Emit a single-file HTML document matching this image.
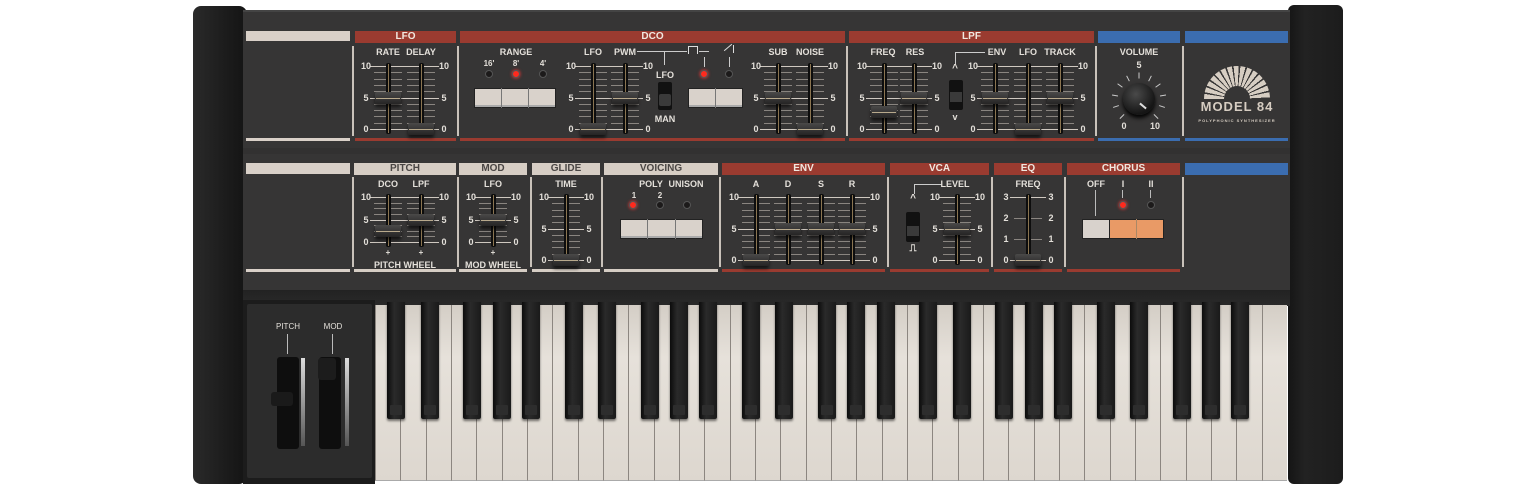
<!DOCTYPE html>
<html><head><meta charset="utf-8">
<style>
*{margin:0;padding:0;box-sizing:border-box}
body{width:1536px;height:488px;background:#fff;position:relative;overflow:hidden;font-family:"Liberation Sans",sans-serif}
div{position:absolute}
.t{color:#e4e0da;font-size:9px;font-weight:bold;white-space:nowrap;transform:translateX(-50%);line-height:10px}
.h{height:12px;font-size:10px;font-weight:bold;text-align:center;line-height:12px;color:#f0e8e0}
.r{background:#9a3b30}.c{background:#d6cdc4;color:#4a4644}.b{background:#3b6db0}
.led{width:8px;height:8px;border-radius:50%;background:#1c1a1a;border:1px solid #555}
.on{background:#ff2a1e;box-shadow:0 0 3px #f33}
</style></head><body>
<div style="left:193px;top:6px;width:54px;height:478px;background:linear-gradient(90deg,#2a2a2a,#1c1c1c 60%,#141414);border-radius:8px"></div>
<div style="left:1288px;top:5px;width:55px;height:479px;background:linear-gradient(90deg,#151515,#222 30%,#1c1c1c);border-radius:6px"></div>
<div style="left:243px;top:10px;width:1047px;height:282px;background:#363535;border-top:2px solid #444"></div>
<div style="left:243px;top:148px;width:1047px;height:6px;background:#323131"></div>
<div style="left:243px;top:290px;width:1047px;height:16px;background:linear-gradient(#222,#2a2a2a)"></div>
<div style="left:243px;top:300px;width:132px;height:184px;background:#1c1c1c"></div>
<div style="left:247px;top:304px;width:125px;height:174px;background:#2c2c2c;border-radius:2px"></div>
<div class="t" style="left:288px;top:322px;font-weight:normal;font-size:8px">PITCH</div>
<div class="t" style="left:333px;top:322px;font-weight:normal;font-size:8px">MOD</div>
<div style="left:287px;top:334px;width:1px;height:20px;background:#bbb"></div>
<div style="left:332px;top:334px;width:1px;height:20px;background:#bbb"></div>
<div style="left:277px;top:357px;width:22px;height:92px;background:#0e0e0e;border-radius:3px"></div>
<div style="left:271px;top:392px;width:22px;height:14px;background:#1a1a1a;border-radius:3px"></div>
<div style="left:319px;top:357px;width:22px;height:92px;background:#0e0e0e;border-radius:3px"></div>
<div style="left:318px;top:358px;width:18px;height:22px;background:#1c1c1c;border-radius:3px"></div>
<div style="left:301px;top:358px;width:4px;height:88px;background:linear-gradient(#ddd,#555)"></div>
<div style="left:345px;top:358px;width:4px;height:88px;background:linear-gradient(#ddd,#555)"></div>
<script>
var R=document.body;
function el(s,c,t){var d=document.createElement('div');d.style.cssText=s;if(c)d.className=c;if(t)d.textContent=t;R.appendChild(d);return d}
function hdr(x,w,y,cls,t){el('left:'+x+'px;top:'+y+'px;width:'+w+'px','h '+cls,t)}
function line(x,w,y,cls){el('left:'+x+'px;top:'+y+'px;width:'+w+'px;height:3px','h '+cls)}
function vl(x,y,h){el('left:'+x+'px;top:'+y+'px;width:2px;height:'+h+'px;background:#c9c2ba')}
function txt(x,y,t,fs){el('left:'+x+'px;top:'+y+'px'+(fs?';font-size:'+fs+'px':''),'t',t)}
function slider(x,y0,y1,k,L,Rt,n){
 n=n||10;
 for(var i=0;i<=n;i++){var y=y0+(y1-y0)*i/n;var maj=(i==0||i==n||i*2==n);
  el('left:'+(x-(maj?18:14))+'px;top:'+y+'px;width:'+(maj?36:28)+'px;height:1px;background:'+(maj?'#cfc8c0':'#8a8580'))}
 el('left:'+(x-2)+'px;top:'+(y0-3)+'px;width:5px;height:'+(y1-y0+8)+'px;background:#0d0d0d;border-radius:2px');
 el('left:'+(x)+'px;top:'+(y0-2)+'px;width:1px;height:'+(y1-y0+6)+'px;background:#8a7450');
 var ky=y1-(y1-y0)*k;
 el('left:'+(x-13)+'px;top:'+(ky-6)+'px;width:26px;height:12px;background:linear-gradient(#4a4948,#252424);border-radius:2px;box-shadow:0 3px 3px rgba(0,0,0,.6)');
 el('left:'+(x-12)+'px;top:'+(ky)+'px;width:24px;height:1px;background:#b8a98c');
 if(L){for(var j=0;j<L.length;j++){var yy=y0+(y1-y0)*j/(L.length-1);txt(x-22,yy-5,L[j]);}}
 if(Rt){for(var j=0;j<Rt.length;j++){var yy=y0+(y1-y0)*j/(Rt.length-1);txt(x+23,yy-5,Rt[j]);}}
}
var S=['10','5','0'];
el('left:246px;top:31px;width:104px;height:10px;background:#d9d0c8');
el('left:246px;top:138px;width:104px;height:3px;background:#d9d0c8');
hdr(355,101,31,'r','LFO');hdr(460,385,31,'r','DCO');hdr(849,245,31,'r','LPF');hdr(1098,82,31,'b','');hdr(1185,103,31,'b','');
line(355,101,138,'r');line(460,385,138,'r');line(849,245,138,'r');line(1098,82,138,'b');line(1185,103,138,'b');
vl(352,46,90);vl(457,46,90);vl(846,46,90);vl(1095,46,90);vl(1182,46,90);
txt(388,47,'RATE');txt(421,47,'DELAY');
slider(388,66,129,0.5,S,null);slider(421,66,129,0,null,S);
txt(516,47,'RANGE');txt(489,59,"16'",8);txt(516,59,"8'",8);txt(543,59,"4'",8);
el('left:485px;top:70px','led');el('left:512px;top:70px','led on');el('left:539px;top:70px','led');
el('left:474px;top:88px;width:82px;height:20px;background:#d9d2cb;border:1px solid #222;box-shadow:inset 0 -2px 0 #aaa');
el('left:501px;top:88px;width:1px;height:20px;background:#777');el('left:528px;top:88px;width:1px;height:20px;background:#777');
txt(593,47,'LFO');txt(625,47,'PWM');
slider(593,66,129,0,S,null);slider(625,66,129,0.5,null,S);
el('left:637px;top:51px;width:50px;height:1px;background:#ccc');el('left:699px;top:51px;width:10px;height:1px;background:#ccc');
el('left:664px;top:51px;width:1px;height:14px;background:#ccc');
el('left:688px;top:46px;width:10px;height:8px;border:1px solid #ddd;border-bottom:none');
el('left:723px;top:47px;width:10px;height:1px;background:#ddd;transform:rotate(-40deg)');
el('left:733px;top:45px;width:1px;height:8px;background:#ddd');
el('left:704px;top:57px;width:1px;height:10px;background:#ccc');el('left:729px;top:57px;width:1px;height:10px;background:#ccc');
txt(665,70,'LFO');txt(665,114,'MAN');
el('left:658px;top:82px;width:14px;height:28px;background:#111;border-radius:2px');
el('left:659px;top:94px;width:12px;height:12px;background:#3a3a3a;border-radius:2px');
el('left:700px;top:70px','led on');el('left:725px;top:70px','led');
el('left:688px;top:88px;width:55px;height:20px;background:#d9d2cb;border:1px solid #222;box-shadow:inset 0 -2px 0 #aaa');
el('left:715px;top:88px;width:1px;height:20px;background:#777');
txt(778,47,'SUB');txt(810,47,'NOISE');
slider(778,66,129,0.5,S,null);slider(810,66,129,0,null,S);
txt(883,47,'FREQ');txt(915,47,'RES');
slider(884,66,129,0.27,S,null);slider(914,66,129,0.5,null,S);
el('left:955px;top:52px;width:30px;height:1px;background:#ccc');el('left:955px;top:52px;width:1px;height:12px;background:#ccc');
txt(955,64,'^',10);txt(955,112,'v',9);
el('left:949px;top:80px;width:14px;height:30px;background:#111;border-radius:2px');
el('left:950px;top:92px;width:12px;height:10px;background:#3a3a3a');
txt(997,47,'ENV');txt(1028,47,'LFO');txt(1060,47,'TRACK');
slider(995,66,129,0.5,S,null);slider(1028,66,129,0,null,null);slider(1060,66,129,0.5,null,S);
txt(1139,47,'VOLUME');txt(1139,60,'5');txt(1124,121,'0');txt(1155,121,'10');
for(var a=0;a<11;a++){var ang=(-135+27*a)*Math.PI/180;var cx=1139+Math.sin(ang)*24,cy=99-Math.cos(ang)*24;
 el('left:'+(cx-3)+'px;top:'+cy+'px;width:6px;height:1px;background:#ccc;transform:rotate('+(-135+27*a+90)+'deg)');}
el('left:1123px;top:83px;width:32px;height:32px;border-radius:50%;background:radial-gradient(circle at 40% 35%,#4a4a4a,#151515 70%);box-shadow:0 3px 4px #000');
el('left:1142px;top:102px;width:2px;height:8px;background:#ddd;transform:rotate(-50deg)');
el('left:1204px;top:66px;width:66px;height:33px;border-radius:33px 33px 0 0;background:repeating-conic-gradient(from -90deg at 50% 100%,#d6cdc2 0 9deg,#363535 9deg 12deg);');
el('left:1224px;top:86px;width:26px;height:13px;border-radius:13px 13px 0 0;background:#363535');
el('left:1237px;top:102px;font-size:13px;letter-spacing:1px;color:#d6cdc2','t','MODEL 84');
el('left:1237px;top:116px;font-size:4px;letter-spacing:1px;color:#d6cdc2','t','POLYPHONIC SYNTHESIZER');
el('left:246px;top:163px;width:104px;height:11px;background:#d9d0c8');
el('left:246px;top:269px;width:104px;height:3px;background:#d9d0c8');
hdr(354,102,163,'c','PITCH');hdr(459,68,163,'c','MOD');hdr(532,68,163,'c','GLIDE');hdr(604,114,163,'c','VOICING');
hdr(722,163,163,'r','ENV');hdr(890,99,163,'r','VCA');hdr(994,68,163,'r','EQ');hdr(1067,113,163,'r','CHORUS');hdr(1185,103,163,'b','');
line(354,102,269,'c');line(459,68,269,'c');line(532,68,269,'c');line(604,114,269,'c');
line(722,163,269,'r');line(890,99,269,'r');line(994,68,269,'r');line(1067,113,269,'r');
vl(352,177,90);vl(457,177,90);vl(530,177,90);vl(601,177,90);vl(719,177,90);vl(887,177,90);vl(991,177,90);vl(1064,177,90);vl(1182,177,90);
txt(388,179,'DCO');txt(421,179,'LPF');
slider(388,197,242,0.25,S,null,8);slider(421,197,242,0.5,null,S,8);
txt(388,248,'+',8);txt(421,248,'+',8);txt(405,260,'PITCH WHEEL');
txt(493,179,'LFO');slider(493,197,242,0.5,S,S,8);txt(493,248,'+',8);txt(493,260,'MOD WHEEL');
txt(566,179,'TIME');slider(566,197,260,0,['10','5','0'],['10','5','0']);
txt(651,179,'POLY');txt(686,179,'UNISON');txt(634,191,'1',8);txt(660,191,'2',8);
el('left:629px;top:201px','led on');el('left:656px;top:201px','led');el('left:683px;top:201px','led');
el('left:620px;top:219px;width:83px;height:20px;background:#d9d2cb;border:1px solid #222;box-shadow:inset 0 -2px 0 #aaa');
el('left:647px;top:219px;width:1px;height:20px;background:#777');el('left:675px;top:219px;width:1px;height:20px;background:#777');
txt(756,179,'A');txt(788,179,'D');txt(821,179,'S');txt(852,179,'R');
slider(756,197,260,0,S,null);slider(788,197,260,0.5,null,null);slider(821,197,260,0.5,null,null);slider(852,197,260,0.5,null,S);
el('left:914px;top:184px;width:28px;height:1px;background:#ccc');el('left:914px;top:184px;width:1px;height:10px;background:#ccc');
txt(955,179,'LEVEL');txt(913,194,'^',10);txt(913,244,'⎍',10);
el('left:906px;top:212px;width:14px;height:30px;background:#111;border-radius:2px');
el('left:907px;top:226px;width:12px;height:10px;background:#3a3a3a');
slider(957,197,260,0.5,S,S);
txt(1028,179,'FREQ');slider(1028,197,260,0,['3','2','1','0'],['3','2','1','0'],3);
txt(1096,179,'OFF');txt(1123,179,'I');txt(1151,179,'II');
el('left:1095px;top:190px;width:1px;height:26px;background:#bbb');
el('left:1122px;top:190px;width:1px;height:8px;background:#bbb');el('left:1150px;top:190px;width:1px;height:8px;background:#bbb');
el('left:1119px;top:201px','led on');el('left:1147px;top:201px','led');
el('left:1082px;top:219px;width:28px;height:20px;background:#d8d2cc;border:1px solid #222');
el('left:1109px;top:219px;width:55px;height:20px;background:#e99a66;border:1px solid #222');
el('left:1136px;top:219px;width:1px;height:20px;background:#a86');
var x0=375,w=912/36;
for(var i=0;i<36;i++){el('left:'+(x0+i*w)+'px;top:305px;width:'+(w+0.5)+'px;height:176px;background:linear-gradient(#d4cec6,#e6e1da 30%,#ddd7cf);border-left:1px solid #8c8680;border-bottom:1px solid #aaa');}
var off=[-4,4,null,-4,0,4,null];
for(var i=0;i<35;i++){var o=off[i%7];if(o===null)continue;var bx=x0+(i+1)*w+o-9;
 el('left:'+bx+'px;top:302px;width:18px;height:117px;background:linear-gradient(90deg,#0c0c0c,#2a2a2a 40%,#1a1a1a);border-radius:0 0 2px 2px;box-shadow:0 2px 2px rgba(0,0,0,.5)');
 el('left:'+(bx+3)+'px;top:405px;width:12px;height:10px;background:#2d2d2d;border-radius:1px');}
</script>
</body></html>
